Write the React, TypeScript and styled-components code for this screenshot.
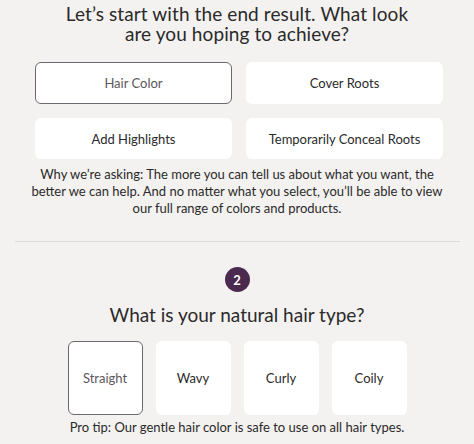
import styled, { createGlobalStyle } from "styled-components"

const Global = createGlobalStyle`
  html, body {
    margin: 0;
    background: #f4f2f0;
  }
  body {
    font-family: Lato, "Liberation Sans", sans-serif;
    color: #2a2a2a;
  }
`

const Page = styled.div`
  width: 474px;
  height: 444px;
  overflow: hidden;
  display: flex;
  flex-direction: column;
  align-items: center;
  padding-top: 4px;
  box-sizing: border-box;
`

const Title = styled.h1`
  margin: 0;
  font-size: 19px;
  line-height: 20px;
  font-weight: 400;
  text-align: center;
  letter-spacing: 0.1px;
`

const OptionGrid = styled.div`
  display: grid;
  grid-template-columns: 197px 197px;
  column-gap: 14px;
  row-gap: 14px;
  margin: 18px 0 0 4px;
`

const Option = styled.button<{ $selected?: boolean; $h: number }>`
  height: ${(p) => p.$h}px;
  background: #fff;
  border: 1.5px solid ${(p) => (p.$selected ? "#6d6770" : "transparent")};
  border-radius: 6px;
  font-family: inherit;
  font-size: 13px;
  color: ${(p) => (p.$selected ? "#5b575c" : "#2a2a2a")};
  padding: 0;
  cursor: pointer;
`

const Note = styled.p`
  margin: 7px 0 0;
  width: 420px;
  font-size: 13px;
  line-height: 17px;
  text-align: center;
`

const Divider = styled.hr`
  width: 445px;
  margin: 24px 0 0;
  border: none;
  border-top: 1px solid #dcdad8;
`

const Badge = styled.div`
  width: 25px;
  height: 25px;
  border-radius: 50%;
  background: #4b2a4f;
  color: #fff;
  font-size: 13px;
  font-weight: 700;
  display: flex;
  align-items: center;
  justify-content: center;
  margin-top: 25px;
`

const Heading = styled.h2`
  margin: 11px 0 0;
  font-size: 19px;
  line-height: 24px;
  font-weight: 400;
`

const TypeRow = styled.div`
  display: flex;
  gap: 13px;
  margin-top: 14px;
`

const TypeCard = styled(Option)`
  width: 75px;
`

const Tip = styled.p`
  margin: 4px 0 0;
  font-size: 13px;
  line-height: 17px;
`

const looks = ["Hair Color", "Cover Roots", "Add Highlights", "Temporarily Conceal Roots"]
const types = ["Straight", "Wavy", "Curly", "Coily"]

export default function App() {
  return (
    <Page>
      <Global />
      <Title>
        Let’s start with the end result. What look
        <br />
        are you hoping to achieve?
      </Title>
      <OptionGrid>
        {looks.map((l, i) => (
          <Option key={l} $selected={i === 0} $h={i < 2 ? 42 : 41}>
            {l}
          </Option>
        ))}
      </OptionGrid>
      <Note>
        Why we’re asking: The more you can tell us about what you want, the
        <br />
        better we can help. And no matter what you select, you’ll be able to view
        <br />
        our full range of colors and products.
      </Note>
      <Divider />
      <Badge>2</Badge>
      <Heading>What is your natural hair type?</Heading>
      <TypeRow>
        {types.map((t, i) => (
          <TypeCard key={t} $selected={i === 0} $h={74}>
            {t}
          </TypeCard>
        ))}
      </TypeRow>
      <Tip>Pro tip: Our gentle hair color is safe to use on all hair types.</Tip>
    </Page>
  )
}
